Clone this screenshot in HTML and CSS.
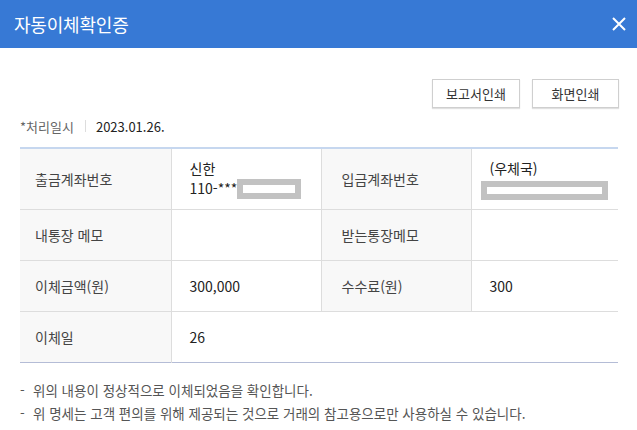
FILE: index.html
```html
<!DOCTYPE html>
<html lang="ko">
<head>
<meta charset="utf-8">
<title>자동이체확인증</title>
<link rel="stylesheet" href="styles.css">
</head>
<body>
<div class="dialog">
  <header class="head">
    <h1 class="title">자동이체확인증</h1>
    <button class="close" aria-label="닫기">
      <svg width="14" height="14" viewBox="0 0 14 14"><path d="M1 1L13 13M13 1L1 13" stroke="#fff" stroke-width="2" fill="none"/></svg>
    </button>
  </header>
  <main class="body">
    <div class="actions">
      <button class="btn">보고서인쇄</button>
      <button class="btn">화면인쇄</button>
    </div>
    <div class="meta">
      <span class="meta-label">*처리일시</span>
      <span class="meta-sep"></span>
      <span class="meta-value">2023.01.26.</span>
    </div>
    <table class="info">
      <colgroup>
        <col class="c1"><col class="c2"><col class="c3"><col class="c4">
      </colgroup>
      <tr class="r1">
        <th class="lab">출금계좌번호</th>
        <td class="val">신한<br>110-***<span class="mask mask-a"></span></td>
        <th class="lab lab-r">입금계좌번호</th>
        <td class="val">(우체국)<span class="mask mask-b"></span></td>
      </tr>
      <tr>
        <th class="lab">내통장 메모</th>
        <td class="val"></td>
        <th class="lab lab-r">받는통장메모</th>
        <td class="val"></td>
      </tr>
      <tr>
        <th class="lab">이체금액(원)</th>
        <td class="val">300,000</td>
        <th class="lab lab-r">수수료(원)</th>
        <td class="val">300</td>
      </tr>
      <tr>
        <th class="lab">이체일</th>
        <td class="val" colspan="3">26</td>
      </tr>
    </table>
    <ul class="notes">
      <li>위의 내용이 정상적으로 이체되었음을 확인합니다.</li>
      <li>위 명세는 고객 편의를 위해 제공되는 것으로 거래의 참고용으로만 사용하실 수 있습니다.</li>
    </ul>
  </main>
</div>
</body>
</html>
```
FILE: styles.css
```css
* { box-sizing: border-box; }
html, body { margin: 0; padding: 0; background: #fff; }
body {
  font-family: "Noto Sans CJK KR", "Noto Sans", "Liberation Sans", sans-serif;
  color: #333;
}
.dialog { width: 637px; height: 430px; overflow: hidden; }
.head {
  height: 48px;
  background: #3779d5;
  display: flex;
  align-items: center;
  justify-content: space-between;
  padding: 0 10px 0 14px;
}
.title {
  margin: 0;
  font-size: 18px;
  font-weight: 400;
  color: #fff;
  letter-spacing: -0.2px;
}
.close {
  background: none;
  border: 0;
  padding: 0;
  width: 14px;
  height: 14px;
  margin-right: 1px;
  display: flex;
}
.body { padding: 0 18px 0 20px; }
.actions {
  display: flex;
  justify-content: flex-end;
  gap: 12px;
  margin-top: 31px;
}
.btn {
  height: 29px;
  width: 88px;
  background: #fff;
  border: 1px solid #cfcfcf;
  box-shadow: 0 1px 1px rgba(0,0,0,0.12);
  font-family: inherit;
  font-size: 13px;
  color: #333;
  padding: 0;
}
.btn + .btn { width: 87px; }
.meta {
  display: flex;
  align-items: center;
  height: 18px;
  margin-top: 9px;
  font-size: 13px;
}
.meta-label { color: #666; }
.meta-sep {
  width: 1px;
  height: 12px;
  background: #ddd;
  margin: 0 10px 0 11px;
}
.meta-value { color: #222; }
.info {
  margin-top: 12px;
  width: 598px;
  table-layout: fixed;
  border-collapse: collapse;
  border-top: 2px solid #c6d7ef;
  border-bottom: 1px solid #b4bcd6;
  font-size: 14px;
}
.c1 { width: 151px; }
.c2 { width: 150px; }
.c3 { width: 150px; }
.c4 { width: 147px; }
.info tr { height: 51px; }
.info tr.r1 { height: 61px; }
.info th, .info td {
  border-top: 1px solid #ddd;
  border-left: 1px solid #ddd;
  text-align: left;
  vertical-align: middle;
  font-weight: 400;
  line-height: 20px;
  padding: 0 10px 0 18px;
}
.info tr:first-child th, .info tr:first-child td { border-top: 0; }
.info th:first-child { border-left: 0; }
.lab { background: #f8f8f8; color: #444; padding-left: 15px !important; }
.lab-r { padding-left: 20px !important; }
.val { background: #fff; color: #222; }
.mask {
  display: inline-block;
  vertical-align: middle;
  background: #fff;
  border: 6px solid #c2c2c2;
}
.mask-a { width: 64px; height: 20px; margin-top: -2px; }
.mask-b { display: block; width: 127px; height: 19px; margin: 3px 0 0 -9px; }
.notes {
  list-style: none;
  margin: 16px 0 0;
  padding: 0;
  font-size: 13.5px;
  color: #555;
  line-height: 23px;
}
.notes li::before {
  content: "-";
  display: inline-block;
  width: 13px;
}
```
